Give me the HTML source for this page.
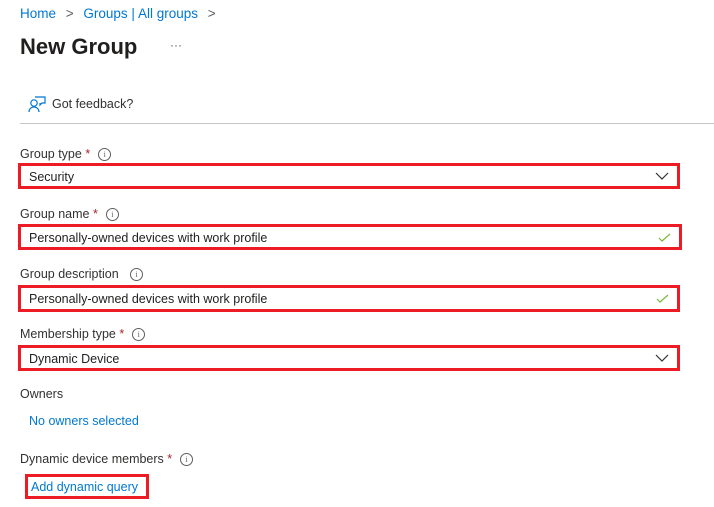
<!DOCTYPE html>
<html><head><style>
body{margin:0;width:714px;height:507px;background:#fff;font-family:"Liberation Sans",sans-serif;color:#323130;position:relative;overflow:hidden}
.a{position:absolute;white-space:nowrap}
.l{font-size:12.5px;color:#323130}
.s{color:#a4262c}
.i{display:inline-block;width:11px;height:11px;border:1px solid #605e5c;border-radius:50%;font-size:8px;line-height:11px;text-align:center;color:#605e5c;vertical-align:1px;margin-left:8px;font-family:"Liberation Serif",serif}
.b{position:absolute;left:18px;border:3px solid #ed1c24;box-sizing:border-box;height:26px;font-size:12.5px;line-height:22px;padding-left:8px;color:#201f1e}
.lk{color:#0078d4}
</style></head><body>
<div class="a lk" style="left:20px;top:6px;font-size:13.5px">Home <span style="color:#605e5c;margin:0 6px">&gt;</span> Groups | All groups <span style="color:#605e5c;margin-left:6px">&gt;</span></div>
<div class="a" style="left:20px;top:34px;font-size:22px;font-weight:bold;color:#201f1e">New Group</div>
<div class="a" style="left:170px;top:38px;font-size:12px;color:#605e5c">···</div>
<svg class="a" style="left:28px;top:96px" width="18" height="17" viewBox="0 0 18 17" fill="none" stroke="#0078d4" stroke-width="1.2"><circle cx="6" cy="7" r="3.2"/><path d="M1 16c0-3 2.3-5 5-5s5 2 5 5"/><path d="M7 1h10v6h-3l-2 2v-2"/></svg>
<div class="a l" style="left:52px;top:97px">Got feedback?</div>
<div class="a" style="left:20px;top:123px;width:694px;height:1px;background:#c8c6c4"></div>

<div class="a l" style="left:20px;top:147px">Group type <span class="s">*</span><span class="i">i</span></div>
<div class="b" style="top:163px;width:662px">Security<svg style="position:absolute;right:8px;top:6px" width="14" height="9"><path d="M1 1l6 6 6-6" stroke="#323130" fill="none" stroke-width="1.2"/></svg></div>

<div class="a l" style="left:20px;top:207px">Group name <span class="s">*</span><span class="i">i</span></div>
<div class="b" style="top:224px;width:664px">Personally-owned devices with work profile<svg style="position:absolute;right:8px;top:6px" width="13" height="9"><path d="M1 5l3 3 8-7" stroke="#7bb83d" fill="none" stroke-width="1.2"/></svg></div>

<div class="a l" style="left:20px;top:267px">Group description <span class="i">i</span></div>
<div class="b" style="top:285px;width:662px;height:27px">Personally-owned devices with work profile<svg style="position:absolute;right:8px;top:6px" width="13" height="9"><path d="M1 5l3 3 8-7" stroke="#7bb83d" fill="none" stroke-width="1.2"/></svg></div>

<div class="a l" style="left:20px;top:327px">Membership type <span class="s">*</span><span class="i">i</span></div>
<div class="b" style="top:345px;width:662px">Dynamic Device<svg style="position:absolute;right:8px;top:6px" width="14" height="9"><path d="M1 1l6 6 6-6" stroke="#323130" fill="none" stroke-width="1.2"/></svg></div>

<div class="a l" style="left:20px;top:387px">Owners</div>
<div class="a l lk" style="left:29px;top:414px">No owners selected</div>

<div class="a l" style="left:20px;top:452px">Dynamic device members <span class="s">*</span><span class="i">i</span></div>
<div class="b lk" style="left:25px;top:474px;width:124px;height:25px;padding-left:3px;line-height:21px">Add dynamic query</div>
</body></html>
